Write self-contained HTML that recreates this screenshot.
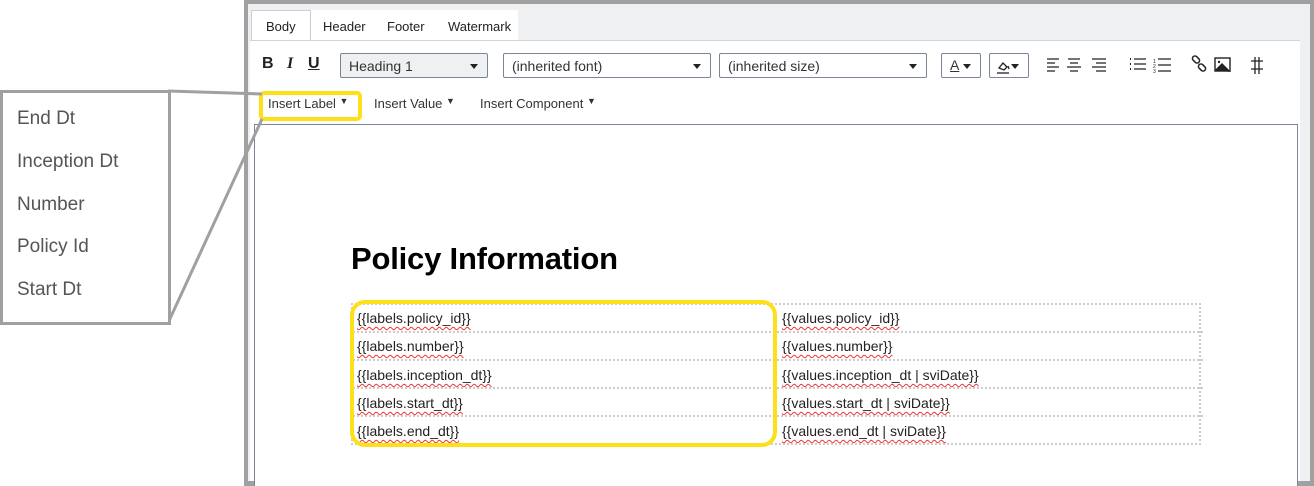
<!DOCTYPE html>
<html><head><meta charset="utf-8"><style>
*{margin:0;padding:0;box-sizing:border-box}
body{width:1314px;height:486px;background:#fff;position:relative;overflow:hidden;font-family:"Liberation Sans",sans-serif;color:#222}
.a{position:absolute}
.sel{position:absolute;top:53px;height:25px;border:1px solid #7a8599;border-radius:2px;font-size:14px;color:#333;padding:4px 8px;background:#fff}
.sel:after{content:"";position:absolute;right:9px;top:10px;border:4px solid transparent;border-top:5px solid #222;border-bottom:0}
.pop{font-size:19px;color:#555;left:17px}
.td{position:absolute;font-size:14px;color:#222;text-decoration:underline wavy #e33;text-decoration-thickness:1px;text-underline-offset:3px}
.hl{position:absolute;left:0;width:850px;border-top:2px dotted #ccc}
</style></head><body>
<div class="a" style="left:244px;top:0;width:1070px;height:486px;background:#a0a0a0"></div>
<div class="a" style="left:248px;top:4px;width:1062px;height:477px;background:#eff0f2"></div>
<div class="a" style="left:251px;top:10px;width:267px;height:31px;background:#fff"></div>
<div class="a" style="left:251px;top:10px;width:60px;height:31px;border:1px solid #ccd;border-bottom:none;background:#fff"></div>
<div class="a" style="left:266px;top:19px;font-size:13px">Body</div>
<div class="a" style="left:323px;top:19px;font-size:13px">Header</div>
<div class="a" style="left:387px;top:19px;font-size:13px">Footer</div>
<div class="a" style="left:448px;top:19px;font-size:13px">Watermark</div>
<div class="a" style="left:250px;top:40px;width:1050px;height:441px;background:#fff;border-top:1px solid #d0d4da"></div>
<div class="a" style="left:262px;top:55px;font-size:16px;font-weight:bold">B</div>
<div class="a" style="left:287px;top:55px;font-size:16px;font-style:italic;font-family:'Liberation Serif',serif;font-weight:bold">I</div>
<div class="a" style="left:308px;top:55px;font-size:16px;font-weight:bold;text-decoration:underline">U</div>
<div class="sel" style="left:340px;width:148px;background:#eff0f2">Heading 1</div>
<div class="sel" style="left:503px;width:208px">(inherited font)</div>
<div class="sel" style="left:719px;width:208px">(inherited size)</div>
<div class="sel" style="left:941px;width:40px;padding:3px 8px"><span style="text-decoration:underline">A</span></div>
<div class="sel" style="left:989px;width:40px;padding:0"><svg width="22" height="22" style="position:absolute;left:4px;top:2px" fill="none" stroke="#222" stroke-width="1.3"><path d="M5 12l4-5 4 4-3 3z"/><path d="M14 10l1 3"/><path d="M3 17h12"/></svg></div>
<svg class="a" style="left:1045px;top:56px" width="130" height="18" stroke="#222" stroke-width="1.3" fill="none">
<path d="M2 3h12M2 7h8M2 11h12M2 15h8"/>
<path d="M23 3h12M25 7h8M22 11h14M25 15h8"/>
<path d="M47 3h14M51 7h10M47 11h14M51 15h10"/>
<path d="M89 3h12M89 8h12M89 13h12"/><path d="M85 3h1M85 8h1M85 13h1" stroke-width="2"/>
<path d="M113 3h13M113 9h13M113 15h13"/>
<text x="108" y="7" font-size="5" fill="#222" stroke="none">1</text><text x="108" y="12" font-size="5" fill="#222" stroke="none">2</text><text x="108" y="17" font-size="5" fill="#222" stroke="none">3</text>
</svg>
<svg class="a" style="left:1190px;top:55px" width="90" height="20" fill="none" stroke="#222" stroke-width="1.5">
<rect x="2" y="2" width="8" height="5" rx="2.5" transform="rotate(45 6 4.5)"/>
<rect x="8" y="10" width="8" height="5" rx="2.5" transform="rotate(45 12 12.5)"/>
<rect x="25" y="3" width="15" height="13" stroke-width="1.4"/><path d="M26 15l6-6 7 7z" fill="#222"/><circle cx="29" cy="7" r="1.2" fill="#222" stroke="none"/>
<path d="M65 2v17M69 2v17M61 6h12M61 14h12" stroke-width="1.3"/>
</svg>
<div class="a" style="left:268px;top:96px;font-size:13px;color:#333">Insert Label <span style="font-size:9px;vertical-align:top">▼</span></div>
<div class="a" style="left:374px;top:96px;font-size:13px;color:#333">Insert Value <span style="font-size:9px;vertical-align:top">▼</span></div>
<div class="a" style="left:480px;top:96px;font-size:13px;color:#333">Insert Component <span style="font-size:9px;vertical-align:top">▼</span></div>
<div class="a" style="left:259px;top:91px;width:103px;height:30px;border:4px solid #fde01a;border-radius:5px"></div>
<div class="a" style="left:254px;top:124px;width:1044px;height:362px;border:1px solid #7a8599;border-bottom:none;background:#fff"></div>
<div class="a" style="left:351px;top:241px;font-size:31px;font-weight:bold;color:#000;letter-spacing:-0.2px">Policy Information</div>
<div class="a" style="left:351px;top:303px;width:850px;height:142px;border:2px dotted #ccc">
<div class="hl" style="top:26px"></div><div class="hl" style="top:54px"></div><div class="hl" style="top:82px"></div><div class="hl" style="top:110px"></div>
</div>
<div class="td" style="left:357px;top:310px">{{labels.policy_id}}</div>
<div class="td" style="left:357px;top:338px">{{labels.number}}</div>
<div class="td" style="left:357px;top:367px">{{labels.inception_dt}}</div>
<div class="td" style="left:357px;top:395px">{{labels.start_dt}}</div>
<div class="td" style="left:357px;top:423px">{{labels.end_dt}}</div>
<div class="td" style="left:782px;top:310px">{{values.policy_id}}</div>
<div class="td" style="left:782px;top:338px">{{values.number}}</div>
<div class="td" style="left:782px;top:367px">{{values.inception_dt | sviDate}}</div>
<div class="td" style="left:782px;top:395px">{{values.start_dt | sviDate}}</div>
<div class="td" style="left:782px;top:423px">{{values.end_dt | sviDate}}</div>
<div class="a" style="left:350px;top:300px;width:427px;height:147px;border:4px solid #fde01a;border-radius:15px"></div>
<svg class="a" style="left:0;top:0" width="300" height="340"><path d="M168 91L262 94M168 323L262 119" stroke="#a0a0a0" stroke-width="3"/></svg>
<div class="a" style="left:0;top:90px;width:171px;height:235px;border:3px solid #a0a0a0;background:#fff"></div>
<div class="a pop" style="top:108px">End Dt</div>
<div class="a pop" style="top:151px">Inception Dt</div>
<div class="a pop" style="top:194px">Number</div>
<div class="a pop" style="top:236px">Policy Id</div>
<div class="a pop" style="top:279px">Start Dt</div>
</body></html>
